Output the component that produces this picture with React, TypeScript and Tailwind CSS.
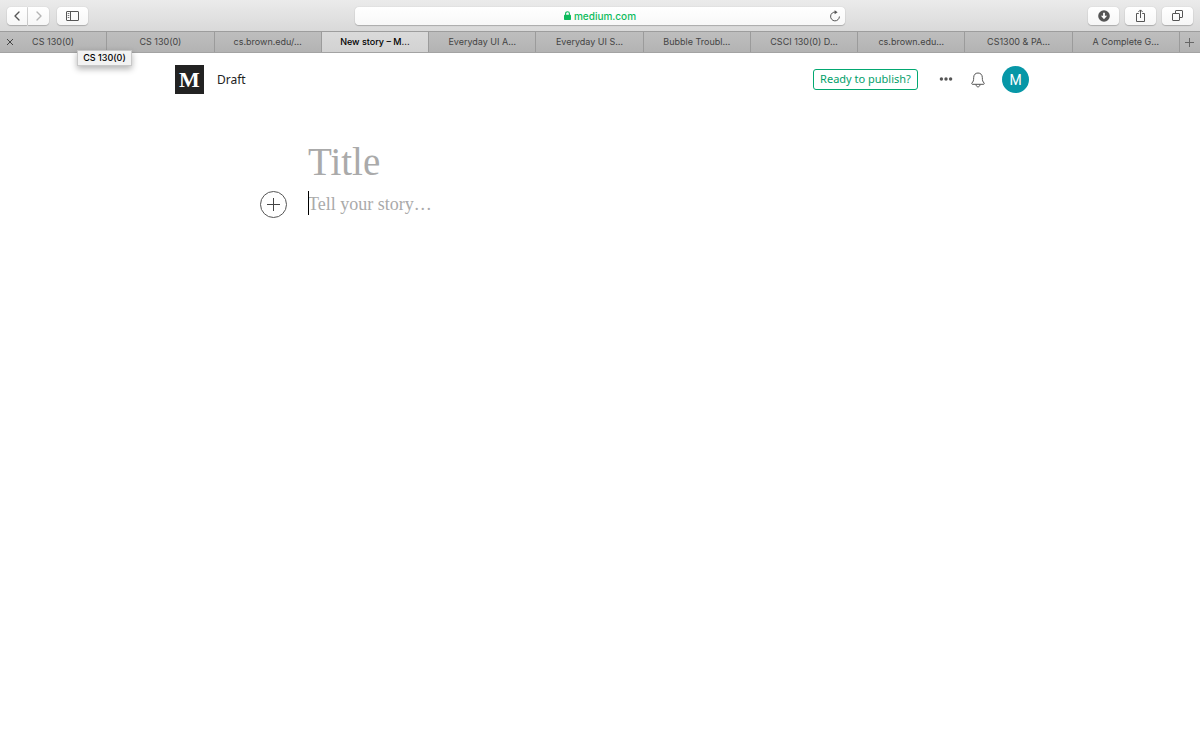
import type { ReactNode } from "react"
import { ChevronLeft, ChevronRight } from "lucide-react"

const tabs = [
  "CS 130(0)",
  "CS 130(0)",
  "cs.brown.edu/…",
  "New story – M…",
  "Everyday UI A…",
  "Everyday UI S…",
  "Bubble Troubl…",
  "CSCI 130(0) D…",
  "cs.brown.edu…",
  "CS1300 & PA…",
  "A Complete G…",
]

const ACTIVE_TAB = 3

function ToolbarButton({
  label,
  className = "w-[31px] rounded",
  children,
}: {
  label: string
  className?: string
  children: ReactNode
}) {
  return (
    <button
      type="button"
      aria-label={label}
      className={`flex h-[18px] items-center justify-center bg-linear-to-b from-white to-[#f6f6f6] text-[#555] shadow-[0_0_1px_rgba(0,0,0,0.25),0_1px_1px_rgba(0,0,0,0.2)] ${className}`}
    >
      {children}
    </button>
  )
}

function Toolbar() {
  return (
    <div className="grid h-[31px] grid-cols-[1fr_490px_1fr] items-center bg-linear-to-b from-[#ebebeb] to-[#d9d9d9] px-[7px]">
      <div className="flex items-center gap-2">
        <div className="flex gap-px">
          <ToolbarButton label="Back" className="w-5 rounded-l">
            <ChevronLeft className="h-4 w-4" strokeWidth={2} />
          </ToolbarButton>
          <ToolbarButton label="Forward" className="w-[21px] rounded-r">
            <ChevronRight className="h-4 w-4 text-[#b4b4b4]" strokeWidth={2} />
          </ToolbarButton>
        </div>
        <ToolbarButton label="Show sidebar">
          <svg className="h-[10px] w-[13px]" viewBox="0 0 13 10" fill="none" stroke="currentColor">
            <rect x="0.5" y="0.5" width="12" height="9" rx="0.5" />
            <path d="M4.5 0.5v9" />
            <path d="M1.7 2.5h1.6M1.7 4.5h1.6M1.7 6.5h1.6" strokeWidth="0.8" />
          </svg>
        </ToolbarButton>
      </div>

      <div className="relative flex h-[18px] items-center justify-center rounded bg-linear-to-b from-white to-[#f8f8f8] shadow-[0_0_1px_rgba(0,0,0,0.25),0_1px_1px_rgba(0,0,0,0.2)]">
        <a
          href="#"
          className="flex items-center gap-[3px] font-[Inter,sans-serif] text-[10px] leading-4 font-medium text-[#0dbb5c]"
        >
          <svg className="h-[9px] w-[7px]" viewBox="0 0 7 9" aria-hidden>
            <path d="M1.6 4.5V2.6a1.9 1.9 0 0 1 3.8 0v1.9" fill="none" stroke="currentColor" strokeWidth="1.1" />
            <rect y="3.8" width="7" height="5.2" rx="0.7" fill="currentColor" />
          </svg>
          medium.com
        </a>
        <button type="button" aria-label="Reload" className="absolute right-1 text-[#555]">
          <svg className="h-3 w-3" viewBox="0 0 12 12" fill="none" stroke="currentColor">
            <path d="M6.6 2.1A4.4 4.4 0 1 0 10.4 6.5" />
            <path d="M5.6 0.2L8.6 2.3L5.6 4.3z" fill="currentColor" stroke="none" />
          </svg>
        </button>
      </div>

      <div className="flex justify-end gap-[6px]">
        <ToolbarButton label="Downloads">
          <svg className="h-3 w-3" viewBox="0 0 12 12">
            <circle cx="6" cy="6" r="5.8" fill="currentColor" />
            <path d="M6 2.7v4" fill="none" stroke="white" strokeWidth="1.8" />
            <path d="M2.9 5.7h6.2L6 9.2z" fill="white" />
          </svg>
        </ToolbarButton>
        <ToolbarButton label="Share">
          <svg className="h-[13px] w-[11px]" viewBox="0 0 11 13" fill="none" stroke="currentColor">
            <path d="M3.8 4.5H1.5v8h8v-8H7.2" />
            <path d="M5.5 9V1M3.3 3.1L5.5 0.9l2.2 2.2" />
          </svg>
        </ToolbarButton>
        <ToolbarButton label="Show all tabs">
          <svg className="h-[11px] w-[11px]" viewBox="0 0 11 11" fill="none" stroke="currentColor">
            <rect x="0.5" y="3.5" width="7" height="7" rx="0.5" />
            <path d="M3.5 3.5v-2.5q0-.5.5-.5h6q.5 0 .5.5v6q0 .5-.5.5H7.5" />
          </svg>
        </ToolbarButton>
      </div>
    </div>
  )
}

function TabBar() {
  return (
    <nav className="relative flex h-[22px] border-y border-t-[#9d9d9d] border-b-[#a3a3a3] bg-linear-to-b from-[#bebebe] to-[#b3b3b3] font-[Inter,sans-serif] text-[9px] text-[#444]">
      {tabs.map((title, i) => (
        <div
          key={i}
          className={`relative flex flex-1 items-center justify-center border-r border-[#9b9b9b] ${
            i === ACTIVE_TAB ? "bg-linear-to-b from-[#dadada] to-[#d2d2d2] font-medium text-black" : ""
          }`}
        >
          {i === 0 && (
            <button type="button" aria-label="Close tab" className="absolute left-[6px]">
              <svg className="h-2 w-2" viewBox="0 0 8 8" stroke="currentColor">
                <path d="M1 1l6 6M7 1L1 7" />
              </svg>
            </button>
          )}
          <a href="#" className="whitespace-nowrap">
            {title}
          </a>
        </div>
      ))}
      <button type="button" aria-label="New tab" className="flex w-5 items-center justify-center text-[#666]">
        <svg className="h-[9px] w-[9px]" viewBox="0 0 9 9" stroke="currentColor">
          <path d="M4.5 0v9M0 4.5h9" />
        </svg>
      </button>
      <div
        role="tooltip"
        className="absolute top-[18px] left-[77px] z-10 flex h-4 w-[55px] items-center justify-center border border-[#c8c8c8] bg-[#f2f2f2] font-medium whitespace-nowrap text-black shadow-[0_3px_6px_rgba(0,0,0,0.3)]"
      >
        CS 130(0)
      </div>
    </nav>
  )
}

function StoryHeader() {
  return (
    <header className="mx-auto flex h-[53px] max-w-[858px] items-center pl-1 font-['Noto_Sans',sans-serif] text-xs">
      <a
        href="#"
        aria-label="Medium home"
        className="flex h-[29px] w-[29px] items-center justify-center bg-[#222] font-['Liberation_Serif',serif] text-[22px] leading-7 font-bold text-white"
      >
        M
      </a>
      <span className="ml-[13px] text-[#222]">Draft</span>
      <div className="ml-auto flex items-center">
        <button
          type="button"
          className="h-[21px] w-[105px] rounded-[3px] border border-[#02a871] text-[11px] whitespace-nowrap text-[#02a06b]"
        >
          Ready to publish?
        </button>
        <button type="button" aria-label="More options" className="ml-[21px] text-[#555]">
          <svg className="h-4 w-[14px]" viewBox="0 0 14 16" fill="currentColor">
            <circle cx="2.4" cy="7" r="1.7" />
            <circle cx="7" cy="7" r="1.7" />
            <circle cx="11.6" cy="7" r="1.7" />
          </svg>
        </button>
        <button type="button" aria-label="Notifications" className="ml-[18px] text-[#555]">
          <svg className="h-4 w-[14px]" viewBox="0 0 14 16" fill="none" stroke="currentColor" strokeLinejoin="round">
            <path d="M7 1c-2.600 0-4.300 1.800-4.300 4.400 0 3.400-.5 4.200-1.800 5.600-.3.400-.2 1.300.5 1.300h11.200c.7 0 .8-.9.5-1.300-1.300-1.400-1.800-2.200-1.800-5.600C11.300 2.800 9.600 1 7 1z" />
            <path d="M5 12.400c0 1.400.8 2.500 2 2.500s2-1.100 2-2.500" />
          </svg>
        </button>
        <button
          type="button"
          aria-label="Account"
          className="ml-[17px] flex h-[27px] w-[27px] items-center justify-center rounded-full bg-[#0797a7] font-[Roboto,sans-serif] text-sm text-white"
        >
          M
        </button>
      </div>
    </header>
  )
}

function Editor() {
  return (
    <main className="mx-auto grid max-w-[680px] grid-cols-[48px_1fr] items-center pt-8 font-['Liberation_Serif',serif]">
      <input
        type="text"
        aria-label="Title"
        placeholder="Title"
        className="col-start-2 h-12 w-full text-[39px] leading-[48px] text-[#333] outline-none placeholder:text-[#aaa]"
      />
      <button
        type="button"
        aria-label="Add content"
        className="flex h-[27px] w-[27px] items-center justify-center rounded-full border border-[#555] text-[#444]"
      >
        <svg className="h-[13px] w-[13px]" viewBox="0 0 13 13" stroke="currentColor">
          <path d="M6.5 0v13M0 6.5h13" />
        </svg>
      </button>
      <div className="relative">
        <input
          type="text"
          aria-label="Story"
          placeholder="Tell your story…"
          className="h-[37px] w-full text-lg text-[#333] outline-none placeholder:text-[#aaa]"
        />
        <span className="absolute top-[5px] left-0 h-6 w-px bg-black" />
      </div>
    </main>
  )
}

export default function App() {
  return (
    <div className="min-h-screen bg-white">
      <Toolbar />
      <TabBar />
      <StoryHeader />
      <Editor />
    </div>
  )
}
